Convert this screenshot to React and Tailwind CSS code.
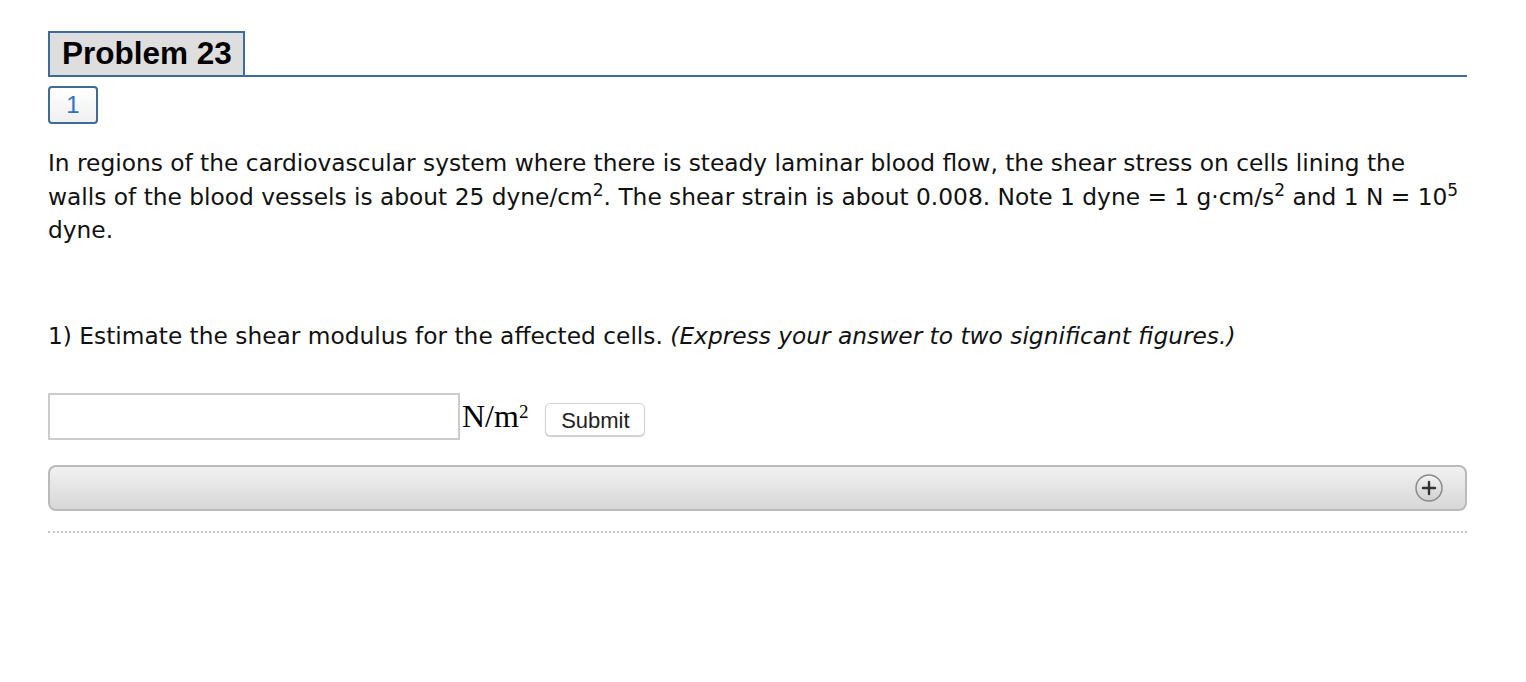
import React from 'react';

const bodyFont = { fontFamily: '"DejaVu Sans", sans-serif' };

const PlusCircle = () => (
  <svg width="30" height="30" viewBox="0 0 30 30">
    <defs>
      <linearGradient id="pc" x1="0" y1="0" x2="0" y2="1">
        <stop offset="0" stopColor="#f4f4f4" />
        <stop offset="1" stopColor="#cfcfcf" />
      </linearGradient>
    </defs>
    <circle cx="15" cy="15" r="13" fill="url(#pc)" stroke="#8a8a8a" strokeWidth="1.5" />
    <path d="M15 9v12M9 15h12" stroke="#333" strokeWidth="2.4" strokeLinecap="round" />
  </svg>
);

export default function App() {
  return (
    <div className="min-h-[682px] bg-white pl-12 pr-[59px] pt-[31px]">
      {/* Tab header */}
      <div className="flex items-end border-b-2 border-[#3f6b99]">
        <div className="h-[46px] w-[197px] -mb-[2px] border-2 border-[#3f6b99] bg-[#dedede] flex items-center pl-[12px] text-[31.5px] font-bold text-black" style={{ fontFamily: '"Liberation Sans", Arial, sans-serif' }}>
          Problem 23
        </div>
      </div>

      {/* Part selector */}
      <div className="mt-[9px]">
        <div className="w-[50px] h-[38px] rounded-[4px] border-2 border-[#3f6b99] bg-gradient-to-b from-white to-[#f0f0f0] flex items-center justify-center text-[24px] text-[#2e72c4]" style={{ fontFamily: '"Liberation Sans", Arial, sans-serif' }}>
          1
        </div>
      </div>

      {/* Problem statement */}
      <p className="mt-[22px] text-[23.3px] leading-[33.5px] text-[#111]" style={bodyFont}>
        In regions of the cardiovascular system where there is steady laminar blood flow, the shear stress on cells lining the<br />
        walls of the blood vessels is about 25 dyne/cm<sup className="text-[17px] leading-none">2</sup>. The shear strain is about 0.008. Note 1 dyne = 1 g·cm/s<sup className="text-[17px] leading-none">2</sup> and 1 N = 10<sup className="text-[17px] leading-none">5</sup><br />
        dyne.
      </p>

      <p className="mt-[72px] text-[23.3px] leading-[33px] text-[#111]" style={bodyFont}>
        1) Estimate the shear modulus for the affected cells. <i>(Express your answer to two significant figures.)</i>
      </p>

      {/* Answer row */}
      <div className="mt-[41px] flex items-center">
        <input type="text" className="w-[412px] h-[47px] border-2 border-[#cccccc] bg-white outline-none" />
        <span className="ml-[2px] text-[32px] leading-none text-black" style={{ fontFamily: '"Liberation Serif", "Times New Roman", serif' }}>
          N/m<sup className="text-[19px] leading-none">2</sup>
        </span>
        <button className="ml-[17px] mt-[6px] h-[33px] w-[100px] rounded-[5px] border border-[#d4d4d4] bg-white shadow-[0_1px_1px_rgba(0,0,0,0.2)] text-[22px] text-[#222]" style={{ fontFamily: '"Liberation Sans", Arial, sans-serif' }}>
          Submit
        </button>
      </div>

      {/* Collapsible bar */}
      <div className="mt-[25px] h-[46px] rounded-[8px] border-2 border-[#bababa] bg-gradient-to-b from-[#f1f1f1] to-[#d7d7d7] flex items-center justify-end pr-[21px]">
        <PlusCircle />
      </div>

      <div className="mt-[20px] border-t-2 border-dotted border-[#c4c4c4]" />
    </div>
  );
}
